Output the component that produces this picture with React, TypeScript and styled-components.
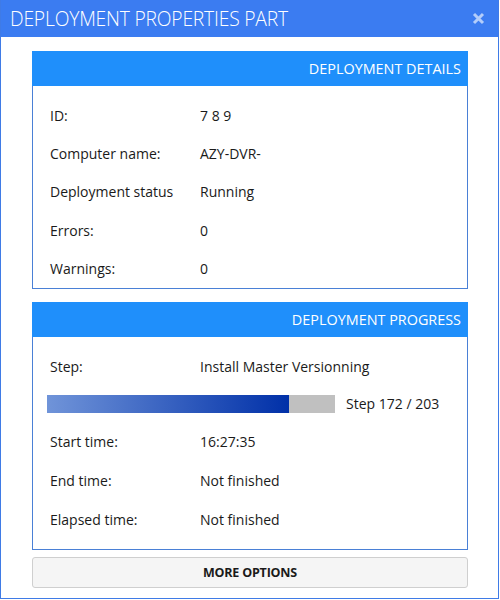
import React from "react";
import styled, { createGlobalStyle } from "styled-components";

const GlobalStyle = createGlobalStyle`
  html, body {
    margin: 0;
    padding: 0;
    background: #ffffff;
  }
  body {
    font-family: "Open Sans", "Noto Sans", sans-serif;
    color: #1a1a1a;
  }
`;

const Window = styled.div`
  box-sizing: border-box;
  width: 499px;
  height: 599px;
  border: 1px solid #3f7be6;
  border-top: none;
  display: flex;
  flex-direction: column;
  background: #ffffff;
`;

const TitleBar = styled.div`
  height: 37px;
  flex-shrink: 0;
  background: #3b7cf1;
  display: flex;
  align-items: center;
  justify-content: space-between;
  padding: 0 13px 0 9px;
`;

const TitleText = styled.span`
  color: #ffffff;
  font-size: 19.3px;
  font-weight: 300;
  letter-spacing: -0.2px;
`;

const CloseButton = styled.button`
  border: none;
  background: transparent;
  padding: 0;
  width: 14px;
  height: 14px;
  display: flex;
  align-items: center;
  justify-content: center;
  cursor: pointer;
`;

const Content = styled.div`
  display: flex;
  flex-direction: column;
  padding: 14px 30px 0 31px;
  gap: 13px;
`;

const Panel = styled.section`
  border: 1px solid #4a80d6;
  border-top: none;
  display: flex;
  flex-direction: column;
`;

const PanelHeader = styled.div`
  height: 35px;
  background: #1f8ffb;
  color: #ffffff;
  font-size: 14.4px;
  display: flex;
  align-items: center;
  justify-content: flex-end;
  padding-right: 7px;
  margin: 0 -1px;
`;

const PanelBody = styled.div<{ $top: number; $bottom: number }>`
  display: flex;
  flex-direction: column;
  padding: ${(p) => p.$top}px 0 ${(p) => p.$bottom}px 17px;
`;

const Row = styled.div<{ $height: number }>`
  height: ${(p) => p.$height}px;
  display: flex;
  align-items: center;
  font-size: 14px;
`;

const Label = styled.span`
  width: 150px;
  flex-shrink: 0;
`;

const Value = styled.span``;

const ProgressRow = styled.div`
  height: 36px;
  display: flex;
  align-items: center;
  font-size: 14px;
  margin-left: -3px;
`;

const Track = styled.div`
  width: 288px;
  height: 18px;
  background: #c0c0c0;
  display: flex;
  margin-right: 11px;
`;

const Fill = styled.div`
  height: 100%;
  background: linear-gradient(to right, #7094d9, #0030a8);
`;

const ButtonWrap = styled.div`
  display: flex;
  flex-direction: column;
  padding: 0 30px 0 31px;
`;

const MoreButton = styled.button`
  margin-top: 7px;
  height: 31px;
  box-sizing: border-box;
  border: 1px solid #cfcfcf;
  border-radius: 3px;
  background: #f5f5f5;
  font-family: "Open Sans", "Noto Sans", sans-serif;
  font-weight: 700;
  font-size: 12.5px;
  color: #1a1a1a;
  cursor: pointer;
  letter-spacing: -0.2px;
`;

const details = [
  ["ID:", "7 8 9"],
  ["Computer name:", "AZY-DVR-"],
  ["Deployment status", "Running"],
  ["Errors:", "0"],
  ["Warnings:", "0"],
];

const times = [
  ["Start time:", "16:27:35"],
  ["End time:", "Not finished"],
  ["Elapsed time:", "Not finished"],
];

const CloseIcon = () => (
  <svg width="13" height="13" viewBox="0 0 13 13">
    <path d="M2 2 L11 11 M11 2 L2 11" stroke="#b3cdfa" strokeWidth="3" strokeLinecap="butt" />
  </svg>
);

export default function App() {
  const current = 172;
  const total = 203;
  const pct = 84;

  return (
    <>
      <GlobalStyle />
      <Window>
        <TitleBar>
          <TitleText>DEPLOYMENT PROPERTIES PART</TitleText>
          <CloseButton aria-label="Close">
            <CloseIcon />
          </CloseButton>
        </TitleBar>
        <Content>
          <Panel>
            <PanelHeader>DEPLOYMENT DETAILS</PanelHeader>
            <PanelBody $top={10} $bottom={0}>
              {details.map(([k, v]) => (
                <Row key={k} $height={38.4}>
                  <Label>{k}</Label>
                  <Value>{v}</Value>
                </Row>
              ))}
            </PanelBody>
          </Panel>
          <Panel>
            <PanelHeader>DEPLOYMENT PROGRESS</PanelHeader>
            <PanelBody $top={11} $bottom={10}>
              <Row $height={38}>
                <Label>Step:</Label>
                <Value>Install Master Versionning</Value>
              </Row>
              <ProgressRow>
                <Track>
                  <Fill style={{ width: `${pct}%` }} />
                </Track>
                <span>
                  Step {current} / {total}
                </span>
              </ProgressRow>
              {times.map(([k, v]) => (
                <Row key={k} $height={39}>
                  <Label>{k}</Label>
                  <Value>{v}</Value>
                </Row>
              ))}
            </PanelBody>
          </Panel>
        </Content>
        <ButtonWrap>
          <MoreButton>MORE OPTIONS</MoreButton>
        </ButtonWrap>
      </Window>
    </>
  );
}
